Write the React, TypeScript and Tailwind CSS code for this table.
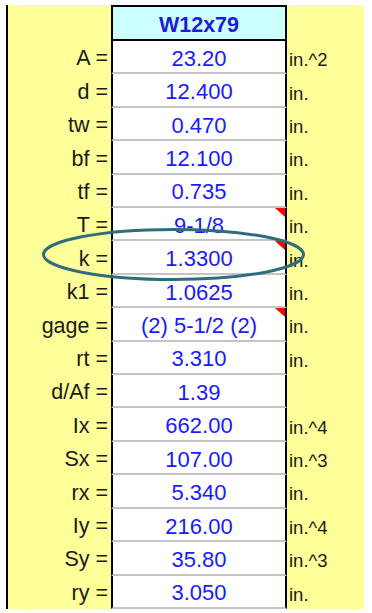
import React from "react";

type Row = { label: string; value: string; unit: string; flag?: boolean };

const rows: Row[] = [
  { label: "A =", value: "23.20", unit: "in.^2" },
  { label: "d =", value: "12.400", unit: "in." },
  { label: "tw =", value: "0.470", unit: "in." },
  { label: "bf =", value: "12.100", unit: "in." },
  { label: "tf =", value: "0.735", unit: "in." },
  { label: "T =", value: "9-1/8", unit: "in.", flag: true },
  { label: "k =", value: "1.3300", unit: "in.", flag: true },
  { label: "k1 =", value: "1.0625", unit: "in." },
  { label: "gage =", value: "(2) 5-1/2 (2)", unit: "in.", flag: true },
  { label: "rt =", value: "3.310", unit: "in." },
  { label: "d/Af =", value: "1.39", unit: "" },
  { label: "Ix =", value: "662.00", unit: "in.^4" },
  { label: "Sx =", value: "107.00", unit: "in.^3" },
  { label: "rx =", value: "5.340", unit: "in." },
  { label: "Iy =", value: "216.00", unit: "in.^4" },
  { label: "Sy =", value: "35.80", unit: "in.^3" },
  { label: "ry =", value: "3.050", unit: "in." },
];

export default function App() {
  return (
    <div
      className="relative w-[372px] h-[613px] bg-white pt-[5px] pl-[6px]"
      style={{ fontFamily: '"Liberation Sans", Arial, sans-serif' }}
    >
      <div className="w-[358px] h-[604px] border-l-2 border-black bg-[#ffff99] flex flex-col">
        {/* header */}
        <div className="grid grid-cols-[103px_176px_77px] h-[36px]">
          <div />
          <div className="border-2 border-black bg-[#ccffff] flex items-end justify-center pb-[2.5px]">
            <span className="text-[21.5px] leading-[21.5px] font-bold text-[#1c1cdc]">W12x79</span>
          </div>
          <div />
        </div>
        {rows.map((r) => (
          <div key={r.label} className="grid grid-cols-[103px_176px_77px] h-[33.41px]">
            <div className="flex items-end justify-end pr-[3px] pb-[4.6px]">
              <span className="text-[21.5px] leading-[21.5px] text-[#1a1a1a] whitespace-nowrap">{r.label}</span>
            </div>
            <div className="relative border-x-2 border-black border-b-2 border-b-[#c4c4c4] bg-white flex items-end justify-center pb-[2.6px]">
              <span className="text-[22px] leading-[22px] text-[#1a1aff] whitespace-nowrap">{r.value}</span>
              {r.flag && (
                <div className="absolute top-0 right-0 w-0 h-0 border-l-[10px] border-l-transparent border-t-[9px] border-t-[#ff0000]" />
              )}
            </div>
            <div className="flex items-end pl-[2px] pb-[4.8px]">
              <span className="text-[18.5px] leading-[18.5px] text-[#1a1a1a] whitespace-nowrap">{r.unit}</span>
            </div>
          </div>
        ))}
      </div>
      <svg
        className="absolute left-0 top-0 pointer-events-none"
        width="372"
        height="613"
        viewBox="0 0 372 613"
      >
        <ellipse cx="173.5" cy="254.5" rx="130" ry="25" fill="none" stroke="#2f6d7c" strokeWidth="3" />
      </svg>
    </div>
  );
}
